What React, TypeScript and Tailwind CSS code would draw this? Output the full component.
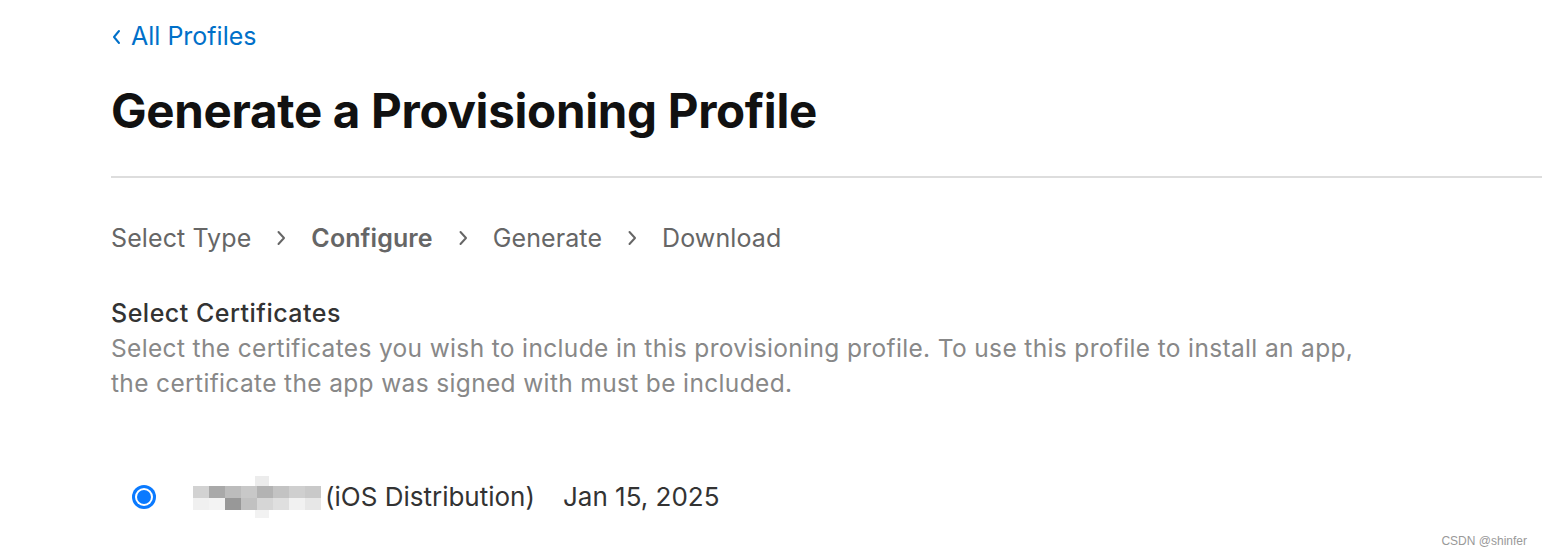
import React from "react";

function Blur() {
  const top = ["#d2d2d2", "#a9a9a9", "#bcbcbc", "#c8c8c8", "#b3b3b3", "#c3c3c3", "#cfcfcf", "#c9c9c9"];
  const bot = ["#f0f0f0", "#f3f3f3", "#989898", "#c1c1c1", "#d6d6d6", "#dfdfdf", "#f1f1f1", "#e7e7e7"];
  return (
    <span className="relative inline-flex flex-col mr-[4px] mt-[2px]">
      <span className="flex">
        {top.map((c, j) => (
          <span key={j} className="block w-[16px] h-[12px]" style={{ background: c }} />
        ))}
      </span>
      <span className="flex">
        {bot.map((c, j) => (
          <span key={j} className="block w-[16px] h-[12px]" style={{ background: c }} />
        ))}
      </span>
      <span className="absolute left-[62px] top-[-10px] w-[14px] h-[10px] bg-[#ececec]" />
      <span className="absolute left-[62px] top-[24px] w-[14px] h-[8px] bg-[#f2f2f2]" />
    </span>
  );
}

export default function App() {
  return (
    <div className="relative w-[1542px] h-[558px] bg-white overflow-hidden" style={{ fontFamily: "Inter, 'Noto Sans', sans-serif" }}>
      <div className="pl-[111px] pt-[20px]">
        <a className="flex items-center text-[25px] leading-[32px] text-[#0070c9]">
          <svg width="12" height="18" viewBox="0 0 12 18" className="mr-[8px] mt-[2px]">
            <path d="M8 3 L3 9 L8 15" fill="none" stroke="#0070c9" strokeWidth="2" strokeLinecap="round" strokeLinejoin="round" />
          </svg>
          All Profiles
        </a>
        <h1 className="mt-[31px] text-[47.5px] leading-[56px] font-bold text-[#111] tracking-[-0.3px]">Generate a Provisioning Profile</h1>
      </div>
      <div className="ml-[111px] mt-[37px] h-[2px] bg-[#dddddd]" />
      <div className="pl-[111px]">
        <div className="mt-[44px] flex items-center text-[25px] leading-[32px] text-[#666] tracking-[0.1px]">
          <span>Select Type</span>
          <Chev />
          <span className="font-semibold">Configure</span>
          <Chev />
          <span>Generate</span>
          <Chev />
          <span>Download</span>
        </div>
        <div className="mt-[43px] text-[25px] leading-[32px] font-medium text-[#333] tracking-[0.5px]">Select Certificates</div>
        <div className="mt-[2px] text-[24.5px] leading-[35px] text-[#888] tracking-[0.35px] w-[1260px]">
          Select the certificates you wish to include in this provisioning profile. To use this profile to install an app,
          <br />
          the certificate the app was signed with must be included.
        </div>
        <div className="mt-[80px] flex items-center text-[26px] leading-[32px] text-[#333]">
          <span className="ml-[21px] w-[24px] h-[24px] rounded-full bg-[#0a7aff] flex items-center justify-center">
            <span className="w-[18px] h-[18px] rounded-full bg-white flex items-center justify-center">
              <span className="w-[14px] h-[14px] rounded-full bg-[#0a7aff]" />
            </span>
          </span>
          <span className="ml-[37px] flex items-center">
            <Blur />
            <span>(iOS Distribution)</span>
          </span>
          <span className="ml-[28px]">Jan 15, 2025</span>
        </div>
      </div>
      <div className="absolute right-[15px] bottom-[8px] text-[12px] text-[#999]" style={{ fontFamily: "'Liberation Sans', sans-serif" }}>CSDN @shinfer</div>
    </div>
  );
}

function Chev() {
  return (
    <svg width="10" height="16" viewBox="0 0 10 16" className="mx-[25px]">
      <path d="M2.5 2 L8 8 L2.5 14" fill="none" stroke="#666" strokeWidth="2" strokeLinecap="round" strokeLinejoin="round" />
    </svg>
  );
}
